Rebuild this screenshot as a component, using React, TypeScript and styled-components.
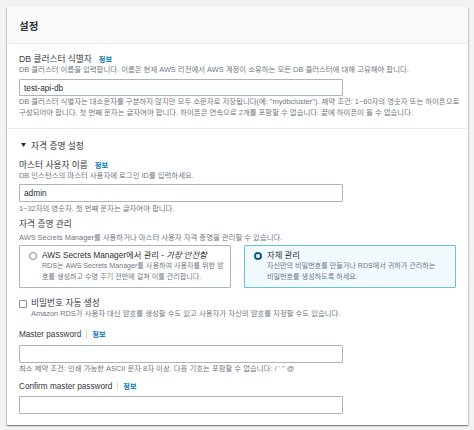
import React from 'react';
import styled, { createGlobalStyle } from 'styled-components';

const GlobalStyle = createGlobalStyle`
  body {
    margin: 0;
    background: #f2f3f3;
    font-family: "Liberation Sans", "Noto Sans CJK KR", sans-serif;
    color: #16191f;
  }
`;

const Page = styled.div`
  padding: 7px 6px 7px 7px;
`;

const Card = styled.section`
  background: #ffffff;
  box-shadow: 0 1px 1px 0 rgba(0, 28, 36, 0.3), 1px 1px 1px 0 rgba(0, 28, 36, 0.15),
    -1px 1px 1px 0 rgba(0, 28, 36, 0.15);
`;

const CardHeader = styled.header`
  display: flex;
  align-items: center;
  box-sizing: border-box;
  height: 37px;
  padding: 0 12px;
  background: #fafafa;
  border-bottom: 1px solid #eaeded;
  font-size: 10.5px;
  font-weight: 700;
  color: #2a2e33;
`;

const Section = styled.div<{ $divider?: boolean; $pt?: number; $pb?: number }>`
  display: flex;
  flex-direction: column;
  align-items: flex-start;
  padding: ${({ $pt }) => $pt ?? 10}px 12px ${({ $pb }) => $pb ?? 10}px;
  border-bottom: ${({ $divider }) => ($divider ? '1px solid #eaeded' : 'none')};
`;

const Expander = styled.div`
  display: flex;
  align-items: center;
  gap: 5px;
  height: 12px;
  padding-left: 2px;
  font-size: 8.7px;
  color: #2a2e33;
`;

const Label = styled.div<{ $mt?: number; $size?: number }>`
  display: flex;
  align-items: center;
  height: 11px;
  margin-top: ${({ $mt }) => $mt ?? 0}px;
  font-size: ${({ $size }) => $size ?? 8.7}px;
  line-height: 11px;
  color: #33383e;
  white-space: nowrap;
`;

const InfoLink = styled.span<{ $divider?: boolean }>`
  margin-left: ${({ $divider }) => ($divider ? 0 : 7)}px;
  font-size: 7.2px;
  font-weight: 700;
  color: #0073bb;
`;

const Divider = styled.span`
  display: inline-block;
  width: 1px;
  height: 9px;
  margin: 0 5px;
  background: #d5dbdb;
`;

const Description = styled.div<{ $mt?: number; $indent?: number; $lh?: number; $size?: number }>`
  margin-top: ${({ $mt }) => $mt ?? 0}px;
  padding-left: ${({ $indent }) => $indent ?? 0}px;
  font-size: ${({ $size }) => $size ?? 7.4}px;
  line-height: ${({ $lh }) => $lh ?? 10}px;
  color: #6f777f;
  white-space: nowrap;
`;

const TextInput = styled.div<{ $mt?: number; $h?: number }>`
  display: flex;
  align-items: center;
  box-sizing: border-box;
  width: 324px;
  height: ${({ $h }) => $h ?? 18}px;
  margin-top: ${({ $mt }) => $mt ?? 0}px;
  padding: 0 4px;
  border: 1px solid #aab7b8;
  border-radius: 1px;
  background: #ffffff;
  font-size: 8.3px;
  color: #2a2e33;
`;

const TileGroup = styled.div`
  display: grid;
  grid-template-columns: 212px 212px;
  gap: 13px;
  margin-top: 2px;
`;

const Tile = styled.div<{ $selected?: boolean }>`
  display: flex;
  gap: 5px;
  box-sizing: border-box;
  height: 43px;
  padding: 4px 9px 0 9px;
  border: 1px solid ${({ $selected }) => ($selected ? '#6cc0de' : '#aab7b8')};
  border-radius: 1px;
  background: ${({ $selected }) => ($selected ? '#f1faff' : '#ffffff')};
`;

const RadioDot = styled.span<{ $checked?: boolean }>`
  flex: none;
  box-sizing: border-box;
  width: 8px;
  height: 8px;
  margin-top: 1.5px;
  border-radius: 50%;
  border: ${({ $checked }) => ($checked ? '2.5px solid #0f5d93' : '1px solid #7d868e')};
  background: #ffffff;
`;

const TileBody = styled.div`
  display: flex;
  flex-direction: column;
`;

const TileTitle = styled.div`
  font-size: 8.3px;
  line-height: 11px;
  color: #2a2e33;
  white-space: nowrap;

  em {
    font-style: italic;
  }
`;

const CheckRow = styled.div`
  display: flex;
  align-items: center;
  gap: 4px;
  margin-top: 10px;
  font-size: 8.7px;
  line-height: 11px;
  color: #33383e;
`;

const CheckBox = styled.span`
  box-sizing: border-box;
  width: 8px;
  height: 8px;
  border: 1px solid #879596;
  border-radius: 1px;
  background: #ffffff;
`;

const Caret = () => (
  <svg width="5" height="4" viewBox="0 0 5 4">
    <polygon points="0,0 5,0 2.5,4" fill="#2a2e33" />
  </svg>
);

const App = () => {
  return (
    <>
      <GlobalStyle />
      <Page>
        <Card>
          <CardHeader>설정</CardHeader>

          <Section $divider>
            <Label>
              DB 클러스터 식별자<InfoLink>정보</InfoLink>
            </Label>
            <Description>
              DB 클러스터 이름을 입력합니다. 이름은 현재 AWS 리전에서 AWS 계정이 소유하는 모든 DB 클러스터에 대해 고유해야 합니다.
            </Description>
            <TextInput $mt={4} $h={17}>test-api-db</TextInput>
            <Description $lh={11}>
              DB 클러스터 식별자는 대소문자를 구분하지 않지만 모두 소문자로 저장됩니다(예: "mydbcluster"). 제약 조건: 1~60자의 영숫자 또는 하이픈으로
              <br />
              구성되어야 합니다. 첫 번째 문자는 글자여야 합니다. 하이픈은 연속으로 2개를 포함할 수 없습니다. 끝에 하이픈이 올 수 없습니다.
            </Description>
          </Section>

          <Section $pt={10} $pb={11}>
            <Expander>
              <Caret />
              자격 증명 설정
            </Expander>

            <Label $mt={9}>
              마스터 사용자 이름<InfoLink>정보</InfoLink>
            </Label>
            <Description>DB 인스턴스의 마스터 사용자에 로그인 ID를 입력하세요.</Description>
            <TextInput $mt={3}>admin</TextInput>
            <Description $mt={2}>1~32자의 영숫자. 첫 번째 문자는 글자여야 합니다.</Description>

            <Label $mt={5}>자격 증명 관리</Label>
            <Description $mt={3}>
              AWS Secrets Manager를 사용하거나 마스터 사용자 자격 증명을 관리할 수 있습니다.
            </Description>
            <TileGroup>
              <Tile>
                <RadioDot />
                <TileBody>
                  <TileTitle>
                    AWS Secrets Manager에서 관리 - <em>가장 안전함</em>
                  </TileTitle>
                  <Description $lh={10.5} $size={7.1}>
                    RDS는 AWS Secrets Manager를 사용하여 사용자를 위한 암
                    <br />
                    호를 생성하고 수명 주기 전반에 걸쳐 이를 관리합니다.
                  </Description>
                </TileBody>
              </Tile>
              <Tile $selected>
                <RadioDot $checked />
                <TileBody>
                  <TileTitle>자체 관리</TileTitle>
                  <Description $lh={10.5} $size={7.1}>
                    자신만의 비밀번호를 만들거나 RDS에서 귀하가 관리하는
                    <br />
                    비밀번호를 생성하도록 하세요.
                  </Description>
                </TileBody>
              </Tile>
            </TileGroup>

            <CheckRow>
              <CheckBox />
              비밀번호 자동 생성
            </CheckRow>
            <Description $indent={12}>
              Amazon RDS가 사용자 대신 암호를 생성할 수도 있고 사용자가 자신의 암호를 지정할 수도 있습니다.
            </Description>

            <Label $mt={10} $size={8.2}>
              Master password
              <Divider />
              <InfoLink $divider>정보</InfoLink>
            </Label>
            <TextInput $mt={5} />
            <Description $mt={1}>
              최소 제약 조건: 인쇄 가능한 ASCII 문자 8자 이상. 다음 기호는 포함할 수 없습니다: / ' " @
            </Description>

            <Label $mt={7} $size={8.2}>
              Confirm master password
              <Divider />
              <InfoLink $divider>정보</InfoLink>
            </Label>
            <TextInput $mt={4} />
          </Section>
        </Card>
      </Page>
    </>
  );
};

export default App;
